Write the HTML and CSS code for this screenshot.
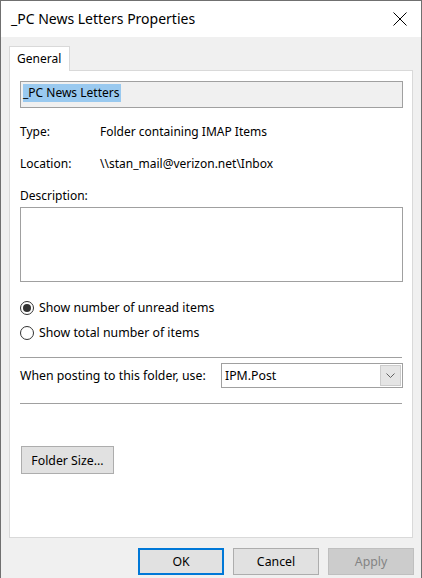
FILE: index.html
```html
<!DOCTYPE html>
<html lang="en">
<head>
    <meta charset="UTF-8">
    <title>_PC News Letters Properties</title>
    <link rel="stylesheet" href="styles.css">
</head>
<body>

    <div class="dialog">
        <div class="titlebar">
            <span class="title">_PC News Letters Properties</span>
            <svg class="close" width="14" height="14" viewBox="0 0 14 14">
                <path d="M0.5 0.5 L13.5 13.5 M13.5 0.5 L0.5 13.5" stroke="#000" stroke-width="1" fill="none"/>
            </svg>
        </div>

        <div class="content">
            <div class="tabs">
                <div class="tab">General</div>
            </div>

            <div class="panel">
                <div class="name-box"><span class="selected">_PC News Letters</span></div>

                <div class="info-row">
                    <span class="info-label">Type:</span>
                    <span>Folder containing IMAP Items</span>
                </div>
                <div class="info-row">
                    <span class="info-label">Location:</span>
                    <span>\\stan_mail@verizon.net\Inbox</span>
                </div>

                <div class="desc-label">Description:</div>
                <div class="desc-box"></div>

                <div class="radio radio-first"><span class="circle checked"></span>Show number of unread items</div>
                <div class="radio"><span class="circle"></span>Show total number of items</div>

                <div class="sep"></div>

                <div class="post-row">
                    <span>When posting to this folder, use:</span>
                    <div class="select">
                        <span class="select-value">IPM.Post</span>
                        <span class="drop">
                            <svg width="9" height="5" viewBox="0 0 9 5">
                                <path d="M0.5 0.5 L4.5 4.5 L8.5 0.5" stroke="#606060" stroke-width="1" fill="none"/>
                            </svg>
                        </span>
                    </div>
                </div>

                <div class="sep sep-second"></div>

                <button class="btn folder-btn">Folder Size...</button>
            </div>

            <div class="actions">
                <button class="btn btn-default">OK</button>
                <button class="btn">Cancel</button>
                <button class="btn btn-disabled">Apply</button>
            </div>
        </div>
    </div>

</body>
</html>
```

FILE: styles.css
```css
body{
    margin: 0;
    background: #f0f0f0;
    font-family: "Noto Sans", "Open Sans", sans-serif;
    font-size: 12px;
    color: #000;
}

.dialog{
    width: 422px;
    height: 578px;
    box-sizing: border-box;
    border: 1px solid #707070;
    border-bottom: none;
    background: #f0f0f0;
    overflow: hidden;
}

.titlebar{
    height: 36px;
    background: #fff;
    display: flex;
    align-items: center;
    justify-content: space-between;
    padding: 0 14px 0 10px;
}

.title{
    font-size: 14px;
    margin-top: -1px;
}

.close{
    display: block;
    margin-top: -1px;
}

.content{
    padding: 9px 8px 0 8px;
}

.tabs{
    display: flex;
}

.tab{
    position: relative;
    z-index: 1;
    height: 25px;
    box-sizing: border-box;
    width: 61px;
    padding: 3px 0 0 7px;
    background: #fff;
    border: 1px solid #d9d9d9;
    border-bottom: none;
    margin-bottom: -1px;
}

.panel{
    height: 468px;
    box-sizing: border-box;
    border: 1px solid #d9d9d9;
    background: #fff;
    padding: 10px 9px 0 10px;
}

.name-box{
    height: 27px;
    box-sizing: border-box;
    border: 1px solid #a0a0a0;
    background: #f0f0f0;
    padding: 2px 0 0 2px;
}

.selected{
    display: inline-block;
    background: #99c9ef;
    height: 18px;
    line-height: 18px;
    padding-right: 2px;
}

.info-row{
    display: flex;
    line-height: 16px;
    margin-top: 16px;
}

.info-label{
    width: 80px;
}

.desc-label{
    line-height: 16px;
    margin-top: 16px;
}

.desc-box{
    height: 75px;
    box-sizing: border-box;
    border: 1px solid #a0a0a0;
    margin-top: 3px;
}

.radio{
    display: flex;
    align-items: center;
    line-height: 16px;
    margin-top: 9px;
    font-size: 12.3px;
}

.radio-first{
    margin-top: 18px;
}

.circle{
    width: 14px;
    height: 14px;
    box-sizing: border-box;
    border: 1px solid #333;
    border-radius: 50%;
    margin-right: 5px;
    display: flex;
    align-items: center;
    justify-content: center;
}

.circle.checked::after{
    content: '';
    width: 8px;
    height: 8px;
    border-radius: 50%;
    background: #333;
}

.sep{
    height: 1px;
    background: #a0a0a0;
    margin: 16px 1px 0 0;
}

.sep-second{
    margin-top: 15px;
}

.post-row{
    display: flex;
    align-items: center;
    justify-content: space-between;
    margin-top: 5px;
    font-size: 12.3px;
}

.select{
    width: 182px;
    height: 25px;
    box-sizing: border-box;
    border: 1px solid #a0a0a0;
    display: flex;
    align-items: center;
    justify-content: space-between;
    padding: 0 1px 0 3px;
}

.select-value{
    margin-top: -1px;
}

.drop{
    width: 21px;
    height: 21px;
    box-sizing: border-box;
    border: 1px solid #cccccc;
    background: #e5e5e5;
    display: flex;
    align-items: center;
    justify-content: center;
}

.btn{
    font-family: inherit;
    font-size: 12.3px;
    color: #000;
    background: #e1e1e1;
    border: 1px solid #adadad;
    height: 27px;
    box-sizing: border-box;
    padding: 0;
}

.folder-btn{
    display: block;
    width: 93px;
    height: 28px;
    margin: 42px 0 0 1px;
}

.actions{
    display: flex;
    justify-content: flex-end;
    gap: 9px;
    margin: 10px -1px 0 0;
}

.actions .btn{
    width: 86px;
}

.btn-default{
    border: 2px solid #0078d7;
}

.btn-disabled{
    background: #cccccc;
    border-color: #bfbfbf;
    color: #838383;
}
```
